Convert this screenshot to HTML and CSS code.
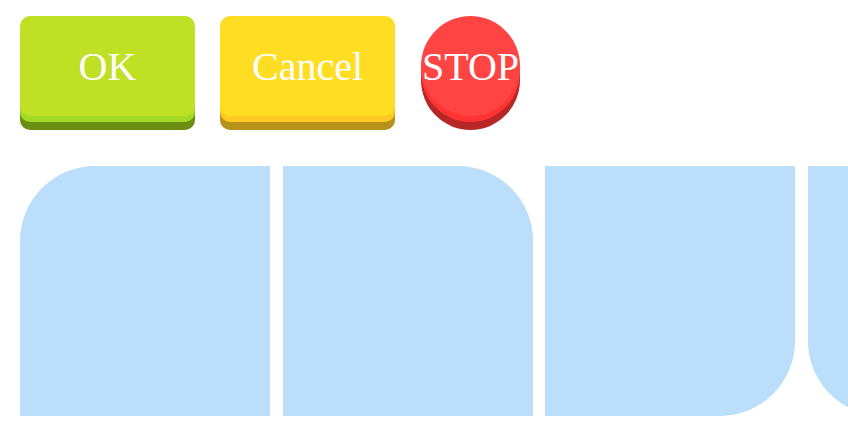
FILE: index.html
```html
<!DOCTYPE html>
<html>
<head>
<meta charset="utf-8">
<link rel="stylesheet" href="styles.css">
</head>
<body>
<div class="buttons">
  <div class="btn btn-ok">OK</div>
  <div class="btn btn-cancel">Cancel</div>
  <div class="btn btn-stop">STOP</div>
</div>
<div class="boxes">
  <div class="box box-tl"></div>
  <div class="box box-tr"></div>
  <div class="box box-br"></div>
  <div class="box box-bl"></div>
</div>
</body>
</html>
```

FILE: styles.css
```css
html, body {
  margin: 0;
  padding: 0;
  background: #ffffff;
  overflow: hidden;
}
body {
  padding: 16px 0 0 20px;
  font-family: "Liberation Serif", "Times New Roman", serif;
}
.buttons {
  display: flex;
  gap: 25px;
  align-items: flex-start;
}
.btn {
  height: 100px;
  display: flex;
  align-items: center;
  justify-content: center;
  color: #ffffff;
  font-size: 40px;
  border-radius: 10px;
}
.btn-ok {
  width: 175px;
  background: #bfe025;
  box-shadow: 0 6px 0 #a2d925, 0 14px 0 #6a8d12;
}
.btn-cancel {
  width: 175px;
  background: #ffdd22;
  box-shadow: 0 6px 0 #fdc822, 0 14px 0 #b7921a;
}
.btn-stop {
  width: 99px;
  margin-left: 1px;
  border-radius: 50%;
  background: #ff4444;
  box-shadow: 0 6px 0 #ff3333, 0 14px 0 #b82727;
  white-space: nowrap;
}
.boxes {
  display: flex;
  gap: 12.67px;
  margin-top: 50px;
  overflow: hidden;
}
.box {
  flex: 0 0 250px;
  height: 250px;
  background: #bbdefb;
}
.box-tl { border-top-left-radius: 75px; }
.box-tr { border-top-right-radius: 75px; }
.box-br { border-bottom-right-radius: 75px; }
.box-bl { border-bottom-left-radius: 75px; }
```
